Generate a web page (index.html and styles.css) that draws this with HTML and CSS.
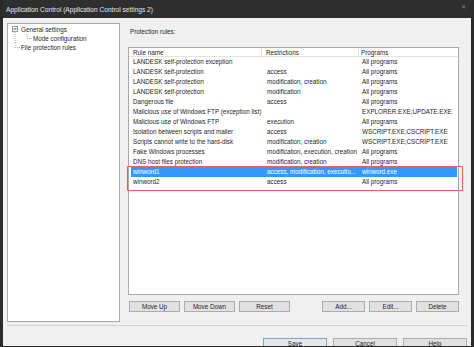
FILE: index.html
```html
<!DOCTYPE html>
<html lang="en">
<head>
    <meta charset="UTF-8">
    <title>Application Control</title>
    <link rel="stylesheet" href="styles.css">
</head>
<body>
    <section class="window">
        <header class="titlebar">
            <span class="title">Application Control (Application Control settings 2)</span>
            <span class="close">&#x2715;</span>
        </header>
        <div class="client">
            <div class="main">
                <nav class="tree">
                    <div class="tree-item">
                        <svg width="13" height="9" viewBox="0 0 13 9">
                            <rect x="4.5" y="1.5" width="5" height="5" fill="#fff" stroke="#9a9a9a"/>
                            <line x1="5.5" y1="4" x2="8.5" y2="4" stroke="#444"/>
                            <line x1="7" y1="7" x2="7" y2="9" stroke="#a8a8a8" stroke-dasharray="1 1"/>
                        </svg>
                        <span>General settings</span>
                    </div>
                    <div class="tree-item">
                        <svg width="25" height="9" viewBox="0 0 25 9">
                            <line x1="7" y1="0" x2="7" y2="9" stroke="#a8a8a8" stroke-dasharray="1 1"/>
                            <line x1="19" y1="0" x2="19" y2="4.5" stroke="#a8a8a8" stroke-dasharray="1 1"/>
                            <line x1="19" y1="4.5" x2="24" y2="4.5" stroke="#a8a8a8" stroke-dasharray="1 1"/>
                        </svg>
                        <span>Mode configuration</span>
                    </div>
                    <div class="tree-item">
                        <svg width="13" height="9" viewBox="0 0 13 9">
                            <line x1="7" y1="0" x2="7" y2="4.5" stroke="#a8a8a8" stroke-dasharray="1 1"/>
                            <line x1="7" y1="4.5" x2="12" y2="4.5" stroke="#a8a8a8" stroke-dasharray="1 1"/>
                        </svg>
                        <span>File protection rules</span>
                    </div>
                </nav>
                <section class="rules">
                    <div class="rules-label">Protection rules:</div>
                    <div class="list">
                        <div class="list-head">
                            <span>Rule name</span>
                            <span>Restrictions</span>
                            <span>Programs</span>
                        </div>
                        <div class="list-body"></div>
                        <div class="highlight"></div>
                    </div>
                    <div class="list-buttons">
                        <div class="group">
                            <button class="btn w-move">Move Up</button>
                            <button class="btn w-move">Move Down</button>
                            <button class="btn w-move">Reset</button>
                        </div>
                        <div class="group">
                            <button class="btn w-small">Add...</button>
                            <button class="btn w-small">Edit...</button>
                            <button class="btn w-small">Delete</button>
                        </div>
                    </div>
                </section>
            </div>
            <footer class="footer">
                <button class="btn w-dialog default">Save</button>
                <button class="btn w-dialog">Cancel</button>
                <button class="btn w-dialog">Help</button>
            </footer>
        </div>
    </section>

    <script>
        const rules = [
            ["LANDESK self-protection exception", "", "All programs"],
            ["LANDESK self-protection", "access", "All programs"],
            ["LANDESK self-protection", "modification, creation", "All programs"],
            ["LANDESK self-protection", "modification", "All programs"],
            ["Dangerous file", "access", "All programs"],
            ["Malicious use of Windows FTP (exception list)", "", "EXPLORER.EXE;UPDATE.EXE"],
            ["Malicious use of Windows FTP", "execution", "All programs"],
            ["Isolation between scripts and mailer", "access", "WSCRIPT.EXE;CSCRIPT.EXE"],
            ["Scripts cannot write to the hard-disk", "modification, creation", "WSCRIPT.EXE;CSCRIPT.EXE"],
            ["Fake Windows processes", "modification, execution, creation", "All programs"],
            ["DNS host files protection", "modification, creation", "All programs"],
            ["winword1", "access, modification, executio...", "winword.exe"],
            ["winword2", "access", "All programs"]
        ]

        const listBody = document.querySelector(".list-body")

        rules.forEach((rule, i) => {
            const row = document.createElement("div")
            row.className = i === 11 ? "row selected" : "row"
            rule.forEach(text => {
                const cell = document.createElement("span")
                cell.textContent = text
                row.appendChild(cell)
            })
            listBody.appendChild(row)
        })
    </script>
</body>
</html>
```

FILE: styles.css
```css
* {
    box-sizing: border-box;
}

body {
    margin: 0;
    background: #2a2a2a;
    font-family: "Liberation Sans", Arial, sans-serif;
    font-size: 6.3px;
    color: #1e1e1e;
}

.window {
    width: 468px;
    height: 346px;
    margin-left: 3px;
    background: #f0f0f0;
    display: flex;
    flex-direction: column;
    overflow: hidden;
}

.titlebar {
    height: 18px;
    margin-left: -3px;
    width: 474px;
    padding: 0 8px 0 6px;
    background: #2e2e2e;
    color: #e6e6e6;
    display: flex;
    align-items: center;
    justify-content: space-between;
    font-size: 6.6px;
    flex-shrink: 0;
}

.close {
    color: #8a8a8a;
    font-size: 6px;
    margin-top: -5px;
}

.client {
    flex: 1;
    padding: 5px 4px 0 4px;
    display: flex;
    flex-direction: column;
}

.main {
    display: flex;
    height: 299px;
}

.tree {
    width: 113px;
    background: #fff;
    border: 1px solid #a9a9a9;
    padding-top: 1px;
}

.tree-item {
    display: flex;
    align-items: center;
    height: 9px;
    white-space: nowrap;
}

.tree-item svg {
    display: block;
    flex-shrink: 0;
}

.rules {
    width: 331px;
    margin-left: 8px;
    display: flex;
    flex-direction: column;
}

.rules-label {
    height: 24px;
    padding: 5px 0 0 2px;
    line-height: 8px;
}

.list {
    position: relative;
    height: 248px;
    background: #fff;
    border: 1px solid #a9a9a9;
}

.list-head {
    display: grid;
    grid-template-columns: 133px 97px 1fr;
    height: 9px;
    line-height: 9px;
    border-bottom: 1px solid #e3e3e3;
}

.list-head span {
    padding-left: 4px;
    border-right: 1px solid #e3e3e3;
}

.list-head span:last-child {
    border-right: none;
    padding-left: 2px;
}

.row {
    display: grid;
    grid-template-columns: 132px 97px 1fr;
    height: 10px;
    line-height: 10px;
    margin: 0 1px 0 2px;
    white-space: nowrap;
}

.row span {
    overflow: hidden;
}

.row span:nth-child(1) {
    padding-left: 2px;
}

.row span:nth-child(2) {
    padding-left: 4px;
}

.row span:nth-child(3) {
    padding-left: 2px;
}

.row.selected {
    background: #3399ff;
    color: #fff;
}

.highlight {
    position: absolute;
    left: -2px;
    top: 118px;
    width: 336px;
    height: 25px;
    border: 1px solid #e2625c;
    border-radius: 1px;
    box-shadow: 0 0 1px rgba(226, 98, 92, 0.6);
}

.list-buttons {
    display: flex;
    justify-content: space-between;
    margin-top: 6px;
    padding-left: 1px;
}

.group {
    display: flex;
    gap: 4px;
}

.btn {
    height: 11px;
    padding: 0;
    background: #e1e1e1;
    border: 1px solid #adadad;
    font-family: "Liberation Sans", Arial, sans-serif;
    font-size: 6.3px;
    color: #1e1e1e;
    line-height: 9px;
}

.w-move {
    width: 51px;
}

.w-small {
    width: 43px;
}

.w-dialog {
    width: 64px;
    height: 10px;
}

.btn.default {
    border-color: #7ea6c9;
    background: #e5e9ee;
}

.footer {
    margin-top: 3px;
    border-top: 1px solid #d5d5d5;
    padding-top: 12px;
    display: flex;
    justify-content: flex-end;
    gap: 6px;
}
```
